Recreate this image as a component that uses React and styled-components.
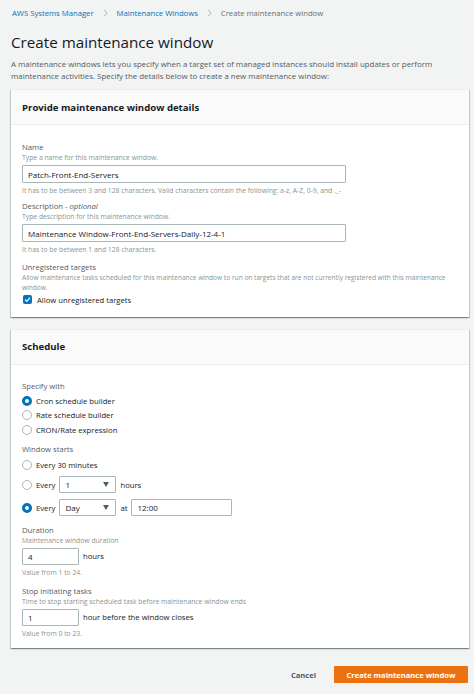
import React from "react";
import styled, { createGlobalStyle } from "styled-components";

const GlobalStyle = createGlobalStyle`
  html, body {
    margin: 0;
    padding: 0;
    background: #f2f3f3;
  }
  body {
    font-family: "Open Sans", "Noto Sans", Arial, sans-serif;
    color: #16191f;
  }
`;

const Page = styled.div`
  width: 474px;
  height: 694px;
  box-sizing: border-box;
  padding: 6px 5px 0 11px;
  overflow: hidden;
`;

const Breadcrumbs = styled.nav`
  display: flex;
  align-items: center;
  gap: 9px;
  font-size: 7.7px;
  height: 14px;
  padding-left: 1px;
`;

const Crumb = styled.a`
  color: ${(p) => (p.$current ? "#687078" : "#0073bb")};
  text-decoration: none;
`;

const Title = styled.h1`
  margin: 12px 0 0;
  font-size: 15.2px;
  font-weight: 400;
  line-height: 20px;
`;

const Intro = styled.p`
  margin: 6px 0 0;
  font-size: 7.9px;
  line-height: 12px;
  color: #545b64;
`;

const Card = styled.section`
  margin-top: ${(p) => p.$top}px;
  background: #fff;
  box-shadow: 0 1px 1px 0 rgba(0, 28, 36, 0.3), 1px 1px 1px 0 rgba(0, 28, 36, 0.15),
    -1px 1px 1px 0 rgba(0, 28, 36, 0.15);
  border-top: 1px solid #eaeded;
`;

const CardHeader = styled.header`
  height: 34px;
  display: flex;
  align-items: center;
  padding: 0 11px;
  background: #fafafa;
  border-bottom: 1px solid #eaeded;
  font-size: 9.6px;
  font-weight: 700;
`;

const CardBody = styled.div`
  padding: ${(p) => p.$pad};
  display: flex;
  flex-direction: column;
`;

const Field = styled.div`
  margin-top: ${(p) => p.$top || 0}px;
  display: flex;
  flex-direction: column;
`;

const Label = styled.div`
  font-size: 7.7px;
  line-height: 11px;
  color: #545b64;
  em {
    font-style: italic;
  }
`;

const Sub = styled.div`
  font-size: ${(p) => (p.$wide ? 6.6 : 6.8)}px;
  line-height: ${(p) => (p.$wide ? 9.5 : 10)}px;
  color: #879596;
`;

const Hint = styled.div`
  margin-top: 3px;
  font-size: 6.8px;
  line-height: 10px;
  color: #879596;
`;

const Input = styled.div`
  margin-top: ${(p) => p.$top ?? 2}px;
  width: ${(p) => p.$w}px;
  height: ${(p) => p.$h || 17}px;
  flex: none;
  box-sizing: border-box;
  border: 1px solid #aab7b8;
  border-radius: 1px;
  background: #fff;
  display: flex;
  align-items: center;
  padding: 0 5px;
  font-size: 8px;
  color: #16191f;
`;

const Select = styled(Input)`
  justify-content: space-between;
  padding: 0 6px 0 5px;
  &::after {
    content: "";
    border-left: 3.5px solid transparent;
    border-right: 3.5px solid transparent;
    border-top: 5px solid #545b64;
  }
`;

const CheckRow = styled.label`
  margin-top: 1.5px;
  height: 12px;
  display: flex;
  align-items: center;
  gap: 5px;
  padding-left: 1px;
  font-size: 7.7px;
  color: #16191f;
`;

const Box = styled.span`
  width: 9px;
  height: 9px;
  border-radius: 2px;
  background: #0073bb;
  display: inline-flex;
  align-items: center;
  justify-content: center;
`;

const RadioRow = styled.div`
  display: flex;
  align-items: center;
  gap: 4px;
  height: ${(p) => p.$h || 14.5}px;
  margin-top: ${(p) => p.$top || 0}px;
  font-size: 7.7px;
  color: #16191f;
`;

const Radio = styled.span`
  width: 10px;
  height: 10px;
  box-sizing: border-box;
  border-radius: 50%;
  border: ${(p) => (p.$on ? "3px solid #0073bb" : "1px solid #aab7b8")};
  background: #fff;
  flex: none;
`;

const Unit = styled.span`
  font-size: 7.7px;
  color: #16191f;
`;

const InlineRow = styled.div`
  display: flex;
  align-items: center;
  gap: 4px;
  margin-top: 2px;
`;

const Actions = styled.div`
  display: flex;
  justify-content: flex-end;
  align-items: center;
  gap: 18px;
  margin-top: 18px;
  padding-right: 1px;
`;

const LinkButton = styled.button`
  background: none;
  border: 0;
  font-family: inherit;
  font-size: 7.6px;
  font-weight: 700;
  color: #545b64;
  padding: 0;
`;

const Primary = styled.button`
  background: #ec7211;
  border: 0;
  border-radius: 1px;
  height: 17px;
  width: 134px;
  font-family: inherit;
  font-size: 7.6px;
  font-weight: 700;
  color: #fff;
  padding: 0;
`;

const Chevron = () => (
  <svg width="5" height="8" viewBox="0 0 5 8">
    <path d="M0.8 0.6 L4.2 4 L0.8 7.4" fill="none" stroke="#aab7b8" strokeWidth="1" />
  </svg>
);

export default function App() {
  return (
    <Page>
      <GlobalStyle />
      <Breadcrumbs>
        <Crumb>AWS Systems Manager</Crumb>
        <Chevron />
        <Crumb>Maintenance Windows</Crumb>
        <Chevron />
        <Crumb $current>Create maintenance window</Crumb>
      </Breadcrumbs>
      <Title>Create maintenance window</Title>
      <Intro>
        A maintenance windows lets you specify when a target set of managed instances should install updates or perform
        maintenance activities. Specify the details below to create a new maintenance window:
      </Intro>

      <Card $top={7}>
        <CardHeader>Provide maintenance window details</CardHeader>
        <CardBody $pad="17px 11px 11px">
          <Field>
            <Label>Name</Label>
            <Sub>Type a name for this maintenance window.</Sub>
            <Input $w={324} $h={18}>Patch-Front-End-Servers</Input>
            <Hint>It has to be between 3 and 128 characters. Valid characters contain the following: a-z, A-Z, 0-9, and ._-</Hint>
          </Field>
          <Field $top={5}>
            <Label>
              Description - <em>optional</em>
            </Label>
            <Sub>Type description for this maintenance window.</Sub>
            <Input $w={324} $h={18}>Maintenance Window-Front-End-Servers-Daily-12-4-1</Input>
            <Hint>It has to be between 1 and 128 characters.</Hint>
          </Field>
          <Field $top={7}>
            <Label>Unregistered targets</Label>
            <Sub $wide>
              Allow maintenance tasks scheduled for this maintenance window to run on targets that are not currently registered with this maintenance
              window.
            </Sub>
            <CheckRow>
              <Box>
                <svg width="7" height="7" viewBox="0 0 10 10">
                  <path d="M1.5 5.2 L4 7.6 L8.6 2.4" fill="none" stroke="#fff" strokeWidth="1.8" />
                </svg>
              </Box>
              Allow unregistered targets
            </CheckRow>
          </Field>
        </CardBody>
      </Card>

      <Card $top={12}>
        <CardHeader>Schedule</CardHeader>
        <CardBody $pad="16px 11px 9.5px">
          <Field>
            <Label>Specify with</Label>
            <RadioRow $top={2}>
              <Radio $on />
              Cron schedule builder
            </RadioRow>
            <RadioRow>
              <Radio />
              Rate schedule builder
            </RadioRow>
            <RadioRow>
              <Radio />
              CRON/Rate expression
            </RadioRow>
          </Field>
          <Field $top={6.5}>
            <Label>Window starts</Label>
            <RadioRow $h={14} $top={3.5}>
              <Radio />
              Every 30 minutes
            </RadioRow>
            <RadioRow $h={17} $top={4}>
              <Radio />
              Every
              <Select $w={57} $top={0}>1</Select>
              <Unit>hours</Unit>
            </RadioRow>
            <RadioRow $h={17} $top={6}>
              <Radio $on />
              Every
              <Select $w={57} $top={0}>Day</Select>
              at
              <Input $w={101} $top={0}>12:00</Input>
            </RadioRow>
          </Field>
          <Field $top={8.5}>
            <Label>Duration</Label>
            <Sub>Maintenance window duration</Sub>
            <InlineRow>
              <Input $w={57} $top={0}>4</Input>
              <Unit>hours</Unit>
            </InlineRow>
            <Hint>Value from 1 to 24.</Hint>
          </Field>
          <Field $top={8}>
            <Label>Stop initiating tasks</Label>
            <Sub>Time to stop starting scheduled task before maintenance window ends</Sub>
            <InlineRow>
              <Input $w={57} $top={0}>1</Input>
              <Unit>hour before the window closes</Unit>
            </InlineRow>
            <Hint>Value from 0 to 23.</Hint>
          </Field>
        </CardBody>
      </Card>

      <Actions>
        <LinkButton>Cancel</LinkButton>
        <Primary>Create maintenance window</Primary>
      </Actions>
    </Page>
  );
}
